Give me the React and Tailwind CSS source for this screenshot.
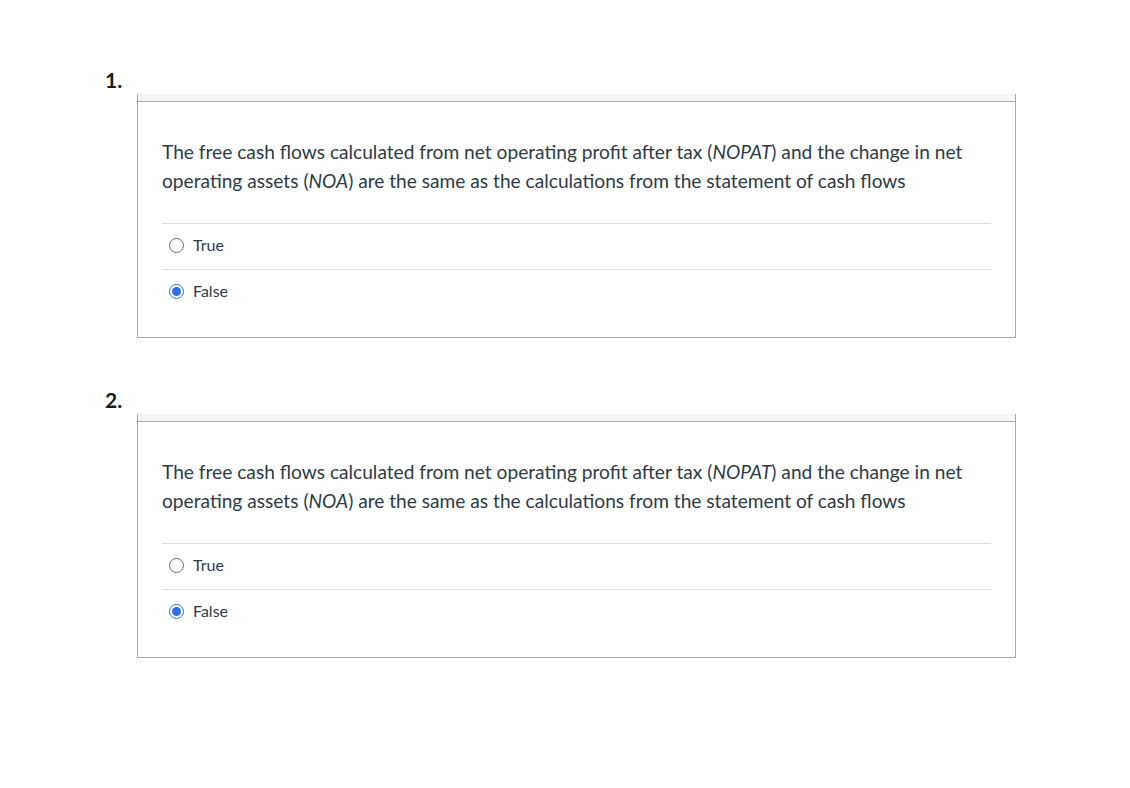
import React from "react";

const Radio = ({ checked }) =>
  checked ? (
    <span className="flex h-[15px] w-[15px] items-center justify-center rounded-full border-[1.5px] border-[#2f6fe4] bg-white">
      <span className="h-[9px] w-[9px] rounded-full bg-[#2f6fe4]" />
    </span>
  ) : (
    <span className="h-[15px] w-[15px] rounded-full border border-[#6b6b6b] bg-white" />
  );

const Question = ({ n }) => (
  <div className="flex flex-col">
    <div className="pl-[105px] text-[21px] font-bold leading-[24px] text-[#1a1a1a]">{n}.</div>
    <div className="ml-[137px] mt-[2px] w-[879px] border border-[#a8a8a8] border-t-0 bg-white">
      <div className="h-[8px] border-b border-[#a8a8a8] bg-[#f5f5f5]" />
      <div className="px-[24px] pt-[35px]">
        <p className="text-[19.15px] leading-[29px] text-[#2d3b45]">
          The free cash flows calculated from net operating profit after tax (<i>NOPAT</i>) and the change in net operating assets (<i>NOA</i>) are the same as the calculations from the statement of cash flows
        </p>
        <div className="mt-[28px] border-t border-[#dcdcdc]">
          <div className="flex h-[45px] items-center gap-[9px] pb-[3px] pl-[7px]">
            <Radio />
            <span className="text-[16px] text-[#2d3b45]">True</span>
          </div>
          <div className="flex h-[45px] items-center gap-[9px] border-t border-[#dcdcdc] pb-[2px] pl-[7px]">
            <Radio checked />
            <span className="text-[16px] text-[#2d3b45]">False</span>
          </div>
        </div>
        <div className="h-[23px]" />
      </div>
    </div>
  </div>
);

export default function App() {
  return (
    <div className="h-[788px] w-[1130px] bg-white pt-[68px]" style={{ fontFamily: "Lato, 'Open Sans', sans-serif" }}>
      <Question n={1} />
      <div className="h-[50px]" />
      <Question n={2} />
    </div>
  );
}
